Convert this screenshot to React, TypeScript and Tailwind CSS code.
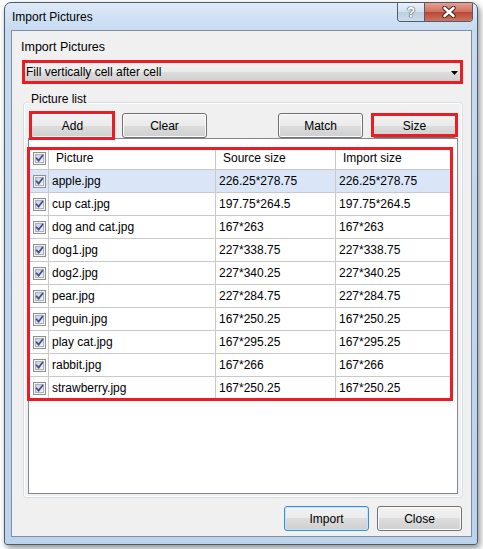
import React from 'react';

interface PictureRow {
    name: string;
    source: string;
    target: string;
}

const pictures: PictureRow[] = [
    { name: 'apple.jpg', source: '226.25*278.75', target: '226.25*278.75' },
    { name: 'cup cat.jpg', source: '197.75*264.5', target: '197.75*264.5' },
    { name: 'dog and cat.jpg', source: '167*263', target: '167*263' },
    { name: 'dog1.jpg', source: '227*338.75', target: '227*338.75' },
    { name: 'dog2.jpg', source: '227*340.25', target: '227*340.25' },
    { name: 'pear.jpg', source: '227*284.75', target: '227*284.75' },
    { name: 'peguin.jpg', source: '167*250.25', target: '167*250.25' },
    { name: 'play cat.jpg', source: '167*295.25', target: '167*295.25' },
    { name: 'rabbit.jpg', source: '167*266', target: '167*266' },
    { name: 'strawberry.jpg', source: '167*250.25', target: '167*250.25' },
];

const CheckBox: React.FC = () => (
    <svg width="13" height="13" viewBox="0 0 13 13" className="block">
        <defs>
            <linearGradient id="cbFill" x1="0" y1="0" x2="1" y2="1">
                <stop offset="0" stopColor="#c9cdd4" />
                <stop offset="1" stopColor="#f7f7f7" />
            </linearGradient>
        </defs>
        <rect x="0.5" y="0.5" width="12" height="12" fill="#f4f4f4" stroke="#8e8f8f" />
        <rect x="2.5" y="2.5" width="8" height="8" fill="url(#cbFill)" stroke="#a9b0ba" />
        <path d="M3.6 6.4 L5.6 8.6 L9.4 3.6" stroke="#3b4f8f" strokeWidth="1.7" fill="none" strokeLinecap="square" />
    </svg>
);

interface WinButtonProps {
    label: string;
    isDefault?: boolean;
    marked?: 'add' | 'size';
    className?: string;
}

const WinButton: React.FC<WinButtonProps> = ({ label, isDefault = false, marked, className = '' }) => (
    <button
        className={`relative h-[25px] w-[85px] shrink-0 rounded-[3px] border bg-[linear-gradient(#f2f2f2_0%,#ebebeb_50%,#dddddd_50%,#cfcfcf_100%)] text-[12px] text-black ${
            isDefault
                ? 'border-[#3c8dd0] shadow-[inset_0_0_0_1px_#bfe6fb]'
                : 'border-[#707070] shadow-[inset_0_0_0_1px_#fbfbfb]'
        } ${className}`}
    >
        {label}
        {marked === 'add' && (
            <span className="pointer-events-none absolute -top-[3px] -bottom-[3px] -left-[2px] -right-[1px] border-[3px] border-[#ec1c24]" />
        )}
        {marked === 'size' && (
            <span className="pointer-events-none absolute -top-[1px] -bottom-[0px] -left-[2px] -right-[2px] border-[3px] border-[#ec1c24]" />
        )}
    </button>
);

const App: React.FC = () => {
    return (
        <div className="h-[549px] w-[483px] overflow-hidden bg-white pt-[2px] font-[Liberation_Sans,Arial,sans-serif]">
            {/* dialog window */}
            <div className="ml-[4px] flex h-[543px] w-[474px] flex-col rounded-t-[7px] rounded-b-[3px] border border-[#4e5b6a] bg-[linear-gradient(#dde9f7,#c6daf0_28px,#bcd3ec)] shadow-[2px_3px_6px_rgba(0,0,0,0.45)]">
                {/* title bar */}
                <div className="flex h-[27px] shrink-0 items-start justify-between">
                    <span className="pl-[7px] pt-[7px] text-[12px] leading-[14px] text-black">Import Pictures</span>
                    <div className="mr-[4px] flex h-[19px] overflow-hidden rounded-b-[4px] border border-t-0 border-[#4d5d72]">
                        <div className="flex w-[27px] items-center justify-center border-r border-[#4d5d72] bg-[linear-gradient(#eaf1f8,#d3e0ee_50%,#bccde2_50%,#cddcec)]">
                            <span className="text-[14px] font-bold leading-none text-white [text-shadow:0_0_1px_#3a4656,0_0_1px_#3a4656,0_0_1px_#3a4656]">?</span>
                        </div>
                        <div className="flex w-[47px] items-center justify-center bg-[linear-gradient(#e6a091,#d06e5b_50%,#bd4432_50%,#cc7560)]">
                            <svg width="16" height="12" viewBox="0 0 16 12">
                                <path d="M3.5 2 L12.5 10 M12.5 2 L3.5 10" stroke="#3e2622" strokeWidth="4.4" strokeLinecap="round" />
                                <path d="M3.5 2 L12.5 10 M12.5 2 L3.5 10" stroke="#ffffff" strokeWidth="2.6" strokeLinecap="round" />
                            </svg>
                        </div>
                    </div>
                </div>

                {/* client area */}
                <div className="ml-[6px] flex h-[507px] w-[461px] flex-col border border-[#7f8ea3] bg-[#f0f0f0] text-black">
                    <div className="pl-[9px] pt-[9px] text-[12.5px] leading-[15px]">Import Pictures</div>

                    {/* placement dropdown */}
                    <div className="ml-[10px] mt-[5px] flex h-[24px] w-[441px] items-center justify-between border-[3px] border-[#ec1c24] bg-[linear-gradient(#f2f2f2_0%,#ebebeb_50%,#dddddd_50%,#cfcfcf_100%)] pl-[1px] pr-[2px] text-[12px]">
                        <span>Fill vertically cell after cell</span>
                        <svg width="7" height="4" viewBox="0 0 7 4" className="mt-[1px]">
                            <path d="M0 0 H7 L3.5 4 Z" fill="#000" />
                        </svg>
                    </div>

                    {/* picture list group */}
                    <div className="relative ml-[11px] mt-[18px] h-[396px] w-[440px] rounded-[3px] border border-[#d5dfe5] pt-[10px] shadow-[inset_0_0_0_1px_#ffffff]">
                        <span className="absolute -top-[11px] left-[5px] bg-[#f0f0f0] px-[2px] text-[12px] leading-[15px]">Picture list</span>

                        <div className="ml-[6px] flex h-[25px] items-center">
                            <WinButton label="Add" marked="add" />
                            <WinButton label="Clear" className="ml-[7px]" />
                            <WinButton label="Match" className="ml-[71px]" />
                            <WinButton label="Size" marked="size" className="ml-[9px]" />
                        </div>

                        {/* list view */}
                        <div className="ml-[4px] h-[356px] w-[430px] border border-[#828790] bg-white pt-[8px] text-[12px]">
                            <div className="relative w-[424px]">
                                <div className="flex h-[23px] items-stretch">
                                    <div className="flex w-[20px] items-center border-r border-b border-[#c9c9c9] pl-[4px]">
                                        <CheckBox />
                                    </div>
                                    <div className="flex w-[167px] items-center border-r border-b border-[#c9c9c9] pl-[7px]">Picture</div>
                                    <div className="flex w-[120px] items-center border-r border-b border-[#c9c9c9] pl-[7px]">Source size</div>
                                    <div className="flex flex-1 items-center border-b border-[#c9c9c9] pl-[7px]">Import size</div>
                                </div>
                                {pictures.map((p, i) => (
                                    <div key={p.name} className={`flex h-[23px] items-stretch ${i === 0 ? 'bg-[#dae6f8]' : ''}`}>
                                        <div className="flex w-[20px] items-center border-r border-b border-[#c9c9c9] pl-[4px]">
                                            <CheckBox />
                                        </div>
                                        <div className="flex w-[167px] items-center border-r border-b border-[#c9c9c9] pl-[3px]">{p.name}</div>
                                        <div className="flex w-[120px] items-center border-r border-b border-[#c9c9c9] pl-[3px]">{p.source}</div>
                                        <div className="flex flex-1 items-center border-b border-[#c9c9c9] pl-[3px]">{p.target}</div>
                                    </div>
                                ))}
                                <span className="pointer-events-none absolute top-0 -bottom-[1px] -left-[2px] right-0 border-[3px] border-[#ec1c24]" />
                            </div>
                        </div>
                    </div>

                    {/* footer buttons */}
                    <div className="mt-[8px] flex justify-end gap-[8px] pr-[9px]">
                        <WinButton label="Import" isDefault />
                        <WinButton label="Close" />
                    </div>
                </div>
            </div>
        </div>
    );
};

export default App;
